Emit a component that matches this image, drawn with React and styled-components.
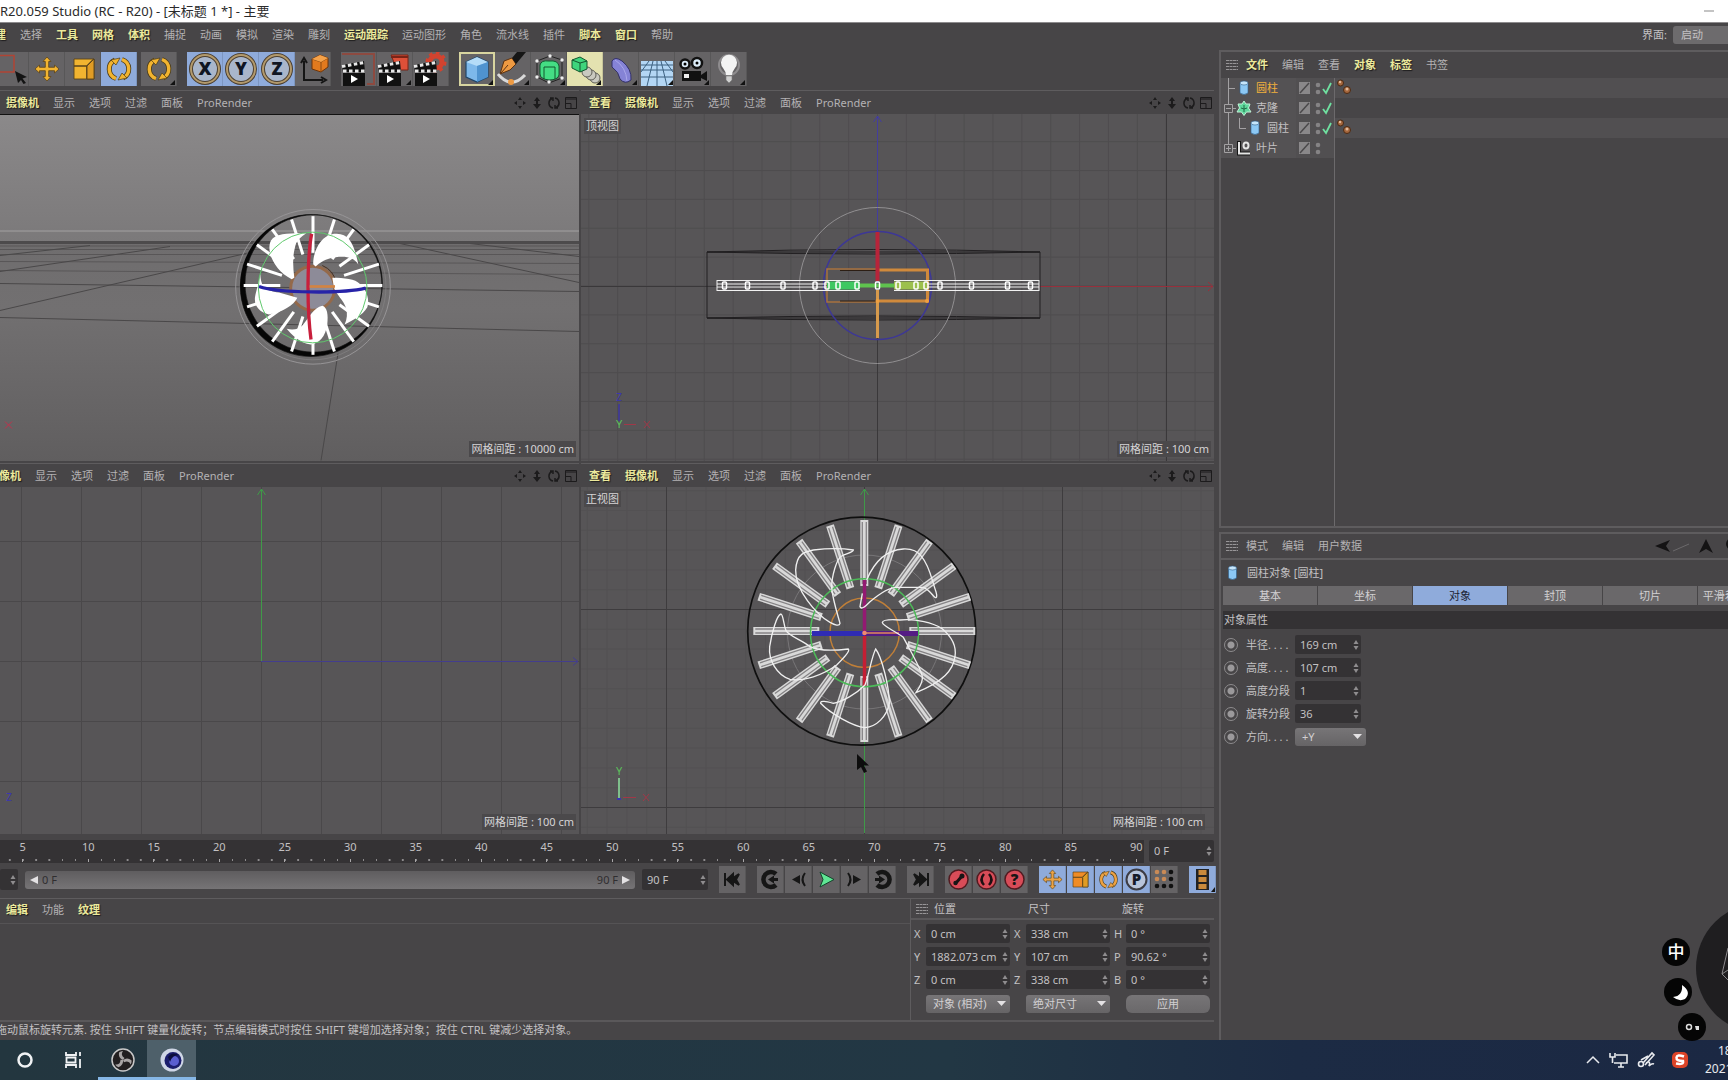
import React, { useState } from 'react';
import styled, { createGlobalStyle, css } from 'styled-components';

const GlobalStyle = createGlobalStyle`
  :root {
    --base: #474547;
    --dark: #343234;
    --edge: #5e5c5e;
    --button: #656365;
    --blue: #8fabdb;
    --text: #c3c1c3;
    --yellow: #ecea9c;
  }
  * { box-sizing: border-box; }
  body {
    margin: 0;
    background: var(--base);
    color: var(--text);
    font-family: 'Noto Sans', 'Noto Sans CJK SC', sans-serif;
    font-size: 11px;
    line-height: 16px;
  }
  button, input, select { font: inherit; color: inherit; margin: 0; padding: 0; border: 0; background: none; border-radius: 0; }
  svg { display: block; }
`;

const Shell = styled.div`
  position: relative;
  display: flex;
  flex-direction: column;
  min-height: 100vh;
  overflow: hidden;
`;

const TitleBar = styled.header`
  display: flex;
  justify-content: space-between;
  align-items: center;
  height: 23px;
  padding-right: 14px;
  background: #fff;
  border-bottom: 1px solid #8d8b8d;
  color: #2b2b2b;
  font-size: 13px;
  white-space: nowrap;
`;
const Minimize = styled.button`
  width: 10px;
  height: 2px;
  background: #c4c4c4;
`;

const MenuBar = styled.nav`
  display: flex;
  align-items: center;
  justify-content: space-between;
  height: 27px;
  padding-bottom: 4px;
`;
const Menu = styled.div`
  display: flex;
  flex: 1;
  align-items: center;
  gap: 14px;
  margin-left: ${p => p.$start || 0}px;
  white-space: nowrap;
`;
const MenuItem = styled.button`
  flex: none;
  color: ${p => (p.$hot ? 'var(--yellow)' : '#b4b2b4')};
  font-weight: ${p => (p.$hot ? 600 : 400)};
  text-shadow: ${p => (p.$hot ? '1px 1px 1px #1d1c1d' : 'none')};
`;
const Layout = styled.div`
  display: flex;
  align-items: center;
  gap: 6px;
  select { appearance: none; width: 55px; height: 18px; padding-left: 8px; background: #6d6b6d; border-radius: 3px 0 0 3px; }
`;

const Workspace = styled.main`
  display: grid;
  grid-template-columns: minmax(0, 1fr) 511px;
  flex: 1;
`;
const LeftSide = styled.div`
  display: flex;
  flex-direction: column;
  min-width: 0;
  padding-right: 3px;
`;

const Toolbar = styled.div`
  display: flex;
  align-items: flex-start;
  gap: 10px;
  height: 40px;
  padding-top: 2px;
  margin-left: -7px;
`;
const ToolGroup = styled.div`
  display: flex;
  gap: ${p => p.$gap || 0}px;
`;
const Tool = styled.button`
  width: ${p => (p.$small ? 27 : 36)}px;
  height: ${p => (p.$small ? 27 : 34)}px;
  background: ${p => (p.$on ? 'var(--blue)' : p.$warm ? '#e4e2b0' : 'var(--button)')};
  box-shadow: ${p => (p.$framed ? 'inset 0 0 0 2px #d8d5a0' : 'inset -1px 0 0 #0000001f')};
`;

const Views = styled.section`
  display: grid;
  grid-template-columns: 579fr 633fr;
  grid-template-rows: 1fr 1fr;
  gap: 2px;
  flex: 1;
  padding-bottom: 6px;
`;
const Pane = styled.article`
  display: flex;
  flex-direction: column;
  min-width: 0;
  overflow: hidden;
`;
const PaneHeader = styled.div`
  display: flex;
  align-items: center;
  justify-content: space-between;
  height: 24px;
  padding-right: 2px;
  border-top: 1px solid var(--edge);
`;
const PaneTools = styled.div`
  display: flex;
  gap: 5px;
  button { width: 12px; height: 12px; }
`;
const Canvas = styled.div`
  position: relative;
  flex: 1;
  background: #575557;
  > svg { position: absolute; inset: 0; width: 100%; height: 100%; }
  ${p => p.$active && css`
    border-top: 1px solid #111;
    outline: 1px solid #cfcdcf;
    outline-offset: -2px;
  `}
`;
const Caption = styled.span`
  position: absolute;
  padding: 0 2px;
  background: #4b494b;
  color: #d6d4d6;
  ${p => (p.$bottom ? css`right: ${p.$right || 3}px; bottom: 4px;` : 'left: 3px; top: 4px;')}
`;

const RulerRow = styled.div`
  display: flex;
  height: 23px;
  gap: 5px;
`;
const Ruler = styled.div`
  flex: 1;
  overflow: hidden;
  background: var(--dark);
`;
const RulerMarks = styled.ol`
  display: flex;
  margin: 0 -25px 0 -10px;
  padding: 0;
  list-style: none;
  line-height: 14px;
  li {
    flex: 1;
    height: 23px;
    text-align: center;
    background: linear-gradient(#a9a7a9, #a9a7a9) center 19px / 1px 3px no-repeat,
      radial-gradient(circle at 50% 20px, #8d8b8d 1px, transparent 1px) 0 0 / 20% 100%;
  }
`;

const Transport = styled.div`
  display: flex;
  align-items: center;
  gap: 11px;
  height: 35px;
  margin-right: -2px;
  padding-bottom: 2px;
`;
const RangeGroup = styled.div`
  display: flex;
  flex: 1;
  align-items: center;
  gap: 7px;
`;
const Range = styled.div`
  display: flex;
  flex: 1;
  align-items: center;
  gap: 4px;
  height: 18px;
  padding: 0 5px;
  border-radius: 3px;
  background: linear-gradient(#5f5d5f, #767476);
  color: #302e30;
  span { flex: 1; }
  span:nth-of-type(2) { text-align: right; }
`;

const FieldBox = styled.div`
  display: flex;
  align-items: center;
  width: ${p => (p.$width ? p.$width + 'px' : 'auto')};
  flex: ${p => (p.$width ? 'none' : 1)};
  min-width: 0;
  height: ${p => p.$height || 19}px;
  padding: 0 2px 0 5px;
  background: var(--dark);
  border-radius: 2px;
  input { flex: 1; width: 0; min-width: 0; outline: none; }
`;
const DropBox = styled.div`
  display: flex;
  align-items: center;
  position: relative;
  width: ${p => (p.$width ? p.$width + 'px' : 'auto')};
  flex: ${p => (p.$width ? 'none' : 1)};
  height: 18px;
  border-radius: 3px;
  background: linear-gradient(#777577, #666466);
  color: #d2d0d2;
  select { appearance: none; width: 100%; height: 18px; padding-left: 7px; }
  svg { position: absolute; right: 4px; pointer-events: none; }
`;

const BottomPanels = styled.section`
  display: flex;
  height: 122px;
  border-top: 1px solid var(--edge);
`;
const Materials = styled.div`
  flex: 1;
`;
const MaterialsHead = styled.div`
  display: flex;
  height: 25px;
  padding: 0 0 2px 6px;
  border-bottom: 1px solid #555355;
`;
const Coordinates = styled.form`
  width: 304px;
  border-left: 1px solid var(--edge);
`;
const CoordHead = styled.div`
  display: flex;
  align-items: center;
  gap: 6px;
  height: 21px;
  padding-left: 5px;
  border-bottom: 2px solid #5a585a;
  b { width: 88px; font-weight: 400; }
`;
const CoordGrid = styled.div`
  display: grid;
  grid-template-columns: repeat(3, 1fr);
  gap: 4px;
  padding: 4px 4px 0 3px;
`;
const CoordCell = styled.div`
  display: flex;
  align-items: center;
  height: ${p => (p.$last ? 22 : 19)}px;
  label { width: 12px; }
`;
const Blank = styled.span`
  width: 12px;
`;
const ApplyButton = styled.button`
  flex: 1;
  height: 18px;
  border-radius: 6px;
  background: linear-gradient(#777577, #6a686a);
  color: #d2d0d2;
`;
const StatusBar = styled.footer`
  height: 20px;
  margin-left: -4px;
  border-top: 2px solid #5a585a;
  white-space: nowrap;
  overflow: hidden;
`;

const RightSide = styled.aside`
  display: grid;
  grid-template-rows: 478fr 508fr;
  gap: 4px;
  margin-left: 2px;
  min-width: 0;
`;
const Manager = styled.section`
  display: flex;
  flex-direction: column;
  min-width: 0;
  overflow: hidden;
  border-left: 2px solid var(--edge);
  border-top: 2px solid var(--edge);
`;
const ManagerHead = styled.div`
  display: flex;
  align-items: center;
  gap: 8px;
  height: 26px;
  padding: 0 0 1px 5px;
`;
const treeColumns = css`
  display: grid;
  grid-template-columns: 75px 39px 1fr;
`;
const Tree = styled.ul`
  margin: 0;
  padding: 0;
  list-style: none;
`;
const TreeRow = styled.li`
  ${treeColumns}
  height: 20px;
`;
const TreeName = styled.div`
  display: flex;
  align-items: center;
  gap: 4px;
  background: #545254;
  color: ${p => (p.$selected ? '#f0b03c' : 'var(--text)')};
`;
const TreeFlags = styled.div`
  background: #514f51;
  border-right: 1px solid #6c6a6c;
`;
const TreeTags = styled.div`
  background: ${p => (p.$alt ? '#514f51' : 'transparent')};
`;
const TreeRest = styled.div`
  ${treeColumns}
  flex: 1;
  i { grid-column: 2; border-right: 1px solid #6c6a6c; }
`;
const TreeEnd = styled.div`
  border-top: 2px solid var(--edge);
`;

const AttrHead = styled(ManagerHead)`
  border-bottom: 2px solid var(--edge);
`;
const AttrNav = styled.div`
  display: flex;
  gap: 4px;
`;
const AttrTitle = styled.div`
  display: flex;
  align-items: center;
  gap: 8px;
  height: 26px;
  padding-left: 5px;
`;
const Tabs = styled.div`
  display: flex;
  gap: 1px;
  margin-left: 2px;
`;
const Tab = styled.button`
  flex: none;
  width: 94px;
  height: 19px;
  white-space: nowrap;
  background: ${p => (p.$on ? 'var(--blue)' : '#6a686a')};
  color: ${p => (p.$on ? '#1c2333' : '#d2d0d2')};
`;
const SectionTitle = styled.h2`
  margin: 6px 0 4px 2px;
  padding-left: 1px;
  height: 18px;
  background: var(--dark);
  font-size: 11px;
  font-weight: 400;
  line-height: 18px;
`;
const AttrRow = styled.div`
  display: flex;
  align-items: center;
  height: 23px;
  padding-left: 3px;
  label { width: 49px; margin-left: 8px; white-space: nowrap; overflow: hidden; }
`;
const KeyDot = styled.input`
  appearance: none;
  width: 14px;
  height: 14px;
  border: 1px solid #8d8b8d !important;
  border-radius: 50% !important;
  background: radial-gradient(circle, #9b999b 3px, transparent 4px) !important;
`;

const Taskbar = styled.div`
  display: flex;
  justify-content: space-between;
  height: 40px;
  overflow: hidden;
  background: linear-gradient(90deg, #23363f, #223744 55%, #1c2b44 75%, #1b2843);
`;
const TaskApps = styled.div`
  display: flex;
`;
const TaskApp = styled.button`
  display: grid;
  place-items: center;
  width: 49px;
  height: 40px;
  background: ${p => (p.$active ? '#4e606a' : 'none')};
  border-bottom: 3px solid ${p => (p.$running ? '#86b7e6' : 'transparent')};
  padding-top: 3px;
`;
const Tray = styled.div`
  display: flex;
  align-items: center;
  gap: 9px;
  color: #e8eaee;
`;
const TrayIcon = styled.button`
  padding: 0 ${p => (p.$wide ? 7 : 0)}px;
`;
const Clock = styled.time`
  width: 23px;
  overflow: hidden;
  font-size: 12px;
  line-height: 18px;
  span { display: block; margin-left: 13px; }
`;
const ImeWidget = styled.div`
  position: absolute;
  right: 0;
  bottom: 38px;
`;

/* ---------- small drawings ---------- */

const Grip = () => (
  <svg width="12" height="12" stroke="#979597" aria-hidden="true">
    <path d="M0 1.5H12M0 4.5H12M0 7.5H12M0 10.5H12" strokeDasharray="3 .5" />
  </svg>
);

const Spin = () => (
  <svg width="6" height="10" fill="#8f8d8f" aria-hidden="true">
    <path d="M3 0L5.5 4H.5ZM3 10L.5 6H5.5Z" />
  </svg>
);

const CylinderIcon = ({ size = 16 }) => (
  <svg width={size} height="16" viewBox={`0 0 ${size} 16`} aria-hidden="true">
    <g transform={`translate(${size / 2 - 5} 0)`}>
      <path d="M1 3V13Q5 16 9 13V3" fill="#8cc8f4" stroke="#2d5c88" strokeWidth=".6" />
      <ellipse cx="5" cy="3" rx="4" ry="2" fill="#c6e6fb" stroke="#2d5c88" strokeWidth=".6" />
    </g>
  </svg>
);

const ClonerIcon = () => (
  <svg width="16" height="16" viewBox="0 0 16 16" aria-hidden="true">
    <path d="M8 1L10 4 14 4 12.500 8 15 12 10.500 12 8 15.500 5.500 12 1 12 3.500 8 2 4 6 4Z" fill="#5fd79c" stroke="#c2f2d8" />
    <path d="M8 5V12M5 8L8 9 11 8" stroke="#1f6b45" fill="none" />
  </svg>
);

const NullIcon = () => (
  <svg width="16" height="16" viewBox="0 0 16 16" fill="none" stroke="#e6e6e6" strokeWidth="2" aria-hidden="true">
    <path d="M3 1V13.500H14" stroke="#151515" strokeWidth="4" />
    <path d="M3 2V13.500H14" />
    <ellipse cx="10" cy="5.500" rx="2.500" ry="3" />
  </svg>
);

const Ring = ({ cx = 18, cy = 17, r = 10, color = '#f2b430' }) => (
  <g fill="none" transform={`translate(${cx} ${cy}) scale(${r / 10})`}>
    <g stroke="#4c3c18" strokeWidth="5">
      <path d="M-3 9.500A10 10 0 0 1 -4 -9M3 -9.500A10 10 0 0 1 4 9" />
    </g>
    <g stroke={color} strokeWidth="3.400">
      <path d="M-3 9.500A10 10 0 0 1 -4 -9M3 -9.500A10 10 0 0 1 4 9" />
    </g>
    <path d="M-8 -9L1 -11 -3 -4ZM8 9L-1 11 3 4Z" fill={color} stroke="#4c3c18" strokeWidth=".7" />
  </g>
);

const MoveCross = ({ cx = 18, cy = 17, s = 1, color = '#f2b430' }) => (
  <path
    transform={`translate(${cx} ${cy}) scale(${s})`}
    d="M0 -12L4 -7.500H1.700V-1.700H7.500V-4L12 0 7.500 4V1.700H1.700V7.500H4L0 12-4 7.500H-1.700V1.700H-7.500V4L-12 0-7.500-4V-1.700H-1.700V-7.500H-4Z"
    fill={color} stroke="#5a431a" strokeWidth=".8"
  />
);

const ScaleBox = ({ x = 9, y = 7, s = 1, color = '#f2b430' }) => (
  <g transform={`translate(${x} ${y}) scale(${s})`} stroke="#5a431a" strokeWidth=".9" fill={color}>
    <path d="M0 0H20V20H0Z" />
    <path d="M0 7H13V20M13 7L20 0" fill="none" strokeWidth="1.600" />
    <path d="M13 7L20 0V20H13Z" fill="#e09c24" />
  </g>
);

const AxisLetter = ({ letter }) => (
  <g>
    <circle cx="18" cy="17" r="14" fill="#a9b6cb" stroke="#4b3f31" strokeWidth="4" />
    <circle cx="18" cy="17" r="14" fill="none" stroke="#b39a6c" strokeWidth="2" />
    <text x="18" y="23" textAnchor="middle" fontFamily="Open Sans, sans-serif" fontSize="18" fontWeight="800" fill="#101522">{letter}</text>
  </g>
);

const Clapper = () => (
  <g>
    <path d="M2 21H24V34H2Z" fill="#111" />
    <path d="M1 13L23 9 24 20H2Z" fill="#111" />
    <path d="M1 14.500L23 10.500M2 19H24" stroke="#e9e9e9" strokeWidth="3" strokeDasharray="3.500 2.500" />
    <path d="M10 23L17 27 10 31Z" fill="#fff" />
  </g>
);

const Corner = () => <path d="M34 28V33H29Z" fill="#111" />;

const art = {
  select: <g><path d="M0 3.500H21V20H0" fill="none" stroke="#b04434" strokeWidth="1.500" /><path d="M22 19L34 25 29.500 26.500 33 31 30.500 32 28 28 25 31Z" fill="#131313" /></g>,
  move: <MoveCross />,
  scale: <ScaleBox />,
  rotate: <Ring />,
  last: <g><Ring /><Corner /></g>,
  x: <AxisLetter letter="X" />,
  y: <AxisLetter letter="Y" />,
  z: <AxisLetter letter="Z" />,
  world: <g>
    <path d="M9 29V9M8 28H28M6 11L9 6 12 11M26 25L31 28 26 31" fill="none" stroke="#151515" strokeWidth="2" />
    <path d="M17 7L25 3 33 6V15L26 20 17 17Z" fill="#e27a1e" stroke="#6f3509" /><path d="M17 7L26 10 33 6M26 10V20" fill="none" stroke="#8a4a12" />
    <path d="M17 7L25 3 33 6 26 10Z" fill="#f5a24a" />
  </g>,
  render: <g><path d="M1 2H33V32H26" fill="none" stroke="#8d4a40" strokeWidth="2" /><Clapper /></g>,
  renderPv: <g><path d="M14 3H31V18H20Z" fill="#dd5038" stroke="#7b2417" /><path d="M14 5H31" stroke="#7b2417" strokeWidth="2" /><Clapper /><Corner /></g>,
  renderSet: <g><circle cx="23" cy="10" r="6" fill="none" stroke="#d3432f" strokeWidth="5" /><circle cx="23" cy="10" r="9" fill="none" stroke="#d3432f" strokeWidth="3" strokeDasharray="3.500 3.500" /><Clapper /></g>,
  cube: <g><path d="M7 10L18 5 29 10V25L18 30 7 25Z" fill="#7db8ea" stroke="#21476a" strokeWidth="1.200" /><path d="M7 10L18 5 29 10 18 14Z" fill="#b4dcf8" /><path d="M18 14L29 10V25L18 30Z" fill="#4f93cf" /><Corner /></g>,
  pen: <g><path d="M3 22Q16 38 30 23" fill="none" stroke="#d9d9d9" strokeWidth="3" /><path d="M5 22L9 9 17 6 21 12 15 18Z" fill="#ee9a42" stroke="#5b3212" /><path d="M6 21L13 13" stroke="#5b3212" /><path d="M17 6L22 0H31L21 12Z" fill="#161616" /><circle cx="16" cy="30" r="3" fill="#ee9a42" /><Corner /></g>,
  subdiv: <g><path d="M6 9L19 4 31 8V26L18 31 6 25Z" fill="none" stroke="#222" /><path d="M9 13Q10 8 18 9 27 8 28 14V23Q27 28 18 28 9 27 9 22Z" fill="#44dd84" stroke="#12562f" /><path d="M13 15H24V27M13 15V27" fill="none" stroke="#12562f" /><g fill="#eee"><circle cx="6" cy="9" r="1.700" /><circle cx="19" cy="4" r="1.700" /><circle cx="31" cy="8" r="1.700" /><circle cx="31" cy="26" r="1.700" /><circle cx="6" cy="25" r="1.700" /><circle cx="18" cy="30" r="1.700" /></g><Corner /></g>,
  array: <g><g fill="#c9c9c0" stroke="#5d5d55"><circle cx="28" cy="26" r="5" /><circle cx="24" cy="23" r="5" /><circle cx="20" cy="20" r="5" /></g><path d="M5 8L13 5 20 9V17L13 20 5 16Z" fill="#3ed47c" stroke="#12562f" /><path d="M5 8L13 11 20 9M13 11V20" fill="none" stroke="#12562f" /><Corner /></g>,
  bend: <g><path d="M9 9Q12 4 19 9 29 17 28 28 22 33 17 27 16 20 9 15Z" fill="#8583d6" stroke="#33316b" /><path d="M12 8Q23 15 24 29" fill="none" stroke="#a9a7ea" /><Corner /></g>,
  floor: <g><path d="M2 9H34V34H2Z" fill="#b3d6f4" /><path d="M2 13H34M2 18H34M2 25H34M10 9L2 20M14 9L8 34M22 9L28 34M26 9L34 20M18 9V34" stroke="#3d6180" fill="none" /><Corner /></g>,
  camera: <g><circle cx="10" cy="12" r="4.500" fill="#dcecf8" stroke="#111" strokeWidth="2.500" /><circle cx="22" cy="11" r="5" fill="#dcecf8" stroke="#111" strokeWidth="2.500" /><circle cx="10" cy="12" r="1.500" /><circle cx="22" cy="11" r="1.500" /><path d="M7 19H26V23L32 19V29L26 26V29H7Z" fill="#111" /><path d="M9 22H14V26H9Z" fill="#eee" /><Corner /></g>,
  light: <g><circle cx="18" cy="13" r="10" fill="none" stroke="#8e8c8e" strokeWidth="2" /><path d="M15 23Q15 20 12 16A8 8 0 1 1 24 16Q21 20 21 23Z" fill="#f3f3f3" /><path d="M15 24H21V28L18 31 15 28Z" fill="#cfcfcf" stroke="#777" strokeWidth=".6" /><Corner /></g>,
};

const mini = {
  first: <path d="M6 7V20M14 8L8 13.500 14 19V15L20 19 17 13.500 20 8 14 12Z" stroke="#161616" strokeWidth="2" />,
  prevKey: <g><path d="M19 8A7.500 7.500 0 1 0 19 19" fill="none" stroke="#161616" strokeWidth="4.500" /><path d="M11 13.500L17 9.500V12H21V15H17V17.500Z" /></g>,
  prev: <g><path d="M7 13.500L15 9V18Z" /><path d="M20 7Q15 13.500 20 20" fill="none" stroke="#161616" strokeWidth="2" /></g>,
  play: <path d="M7 6L21 13.500 7 21 10 13.500Z" fill="#5fe694" stroke="#12442a" />,
  next: <g><path d="M20 13.500L12 9V18Z" /><path d="M7 7Q12 13.500 7 20" fill="none" stroke="#161616" strokeWidth="2" /></g>,
  nextKey: <g><path d="M8 8A7.500 7.500 0 1 1 8 19" fill="none" stroke="#161616" strokeWidth="4.500" /><path d="M16 13.500L10 9.500V12H6V15H10V17.500Z" /></g>,
  last: <path d="M21 7V20M13 8L19 13.500 13 19V15L7 19 10 13.500 7 8 13 12Z" stroke="#161616" strokeWidth="2" />,
  record: <g><circle cx="13.500" cy="13.500" r="9.500" fill="#d84c58" stroke="#521a20" strokeWidth="1.500" /><path d="M10 18L18 9" stroke="#1d1012" strokeWidth="3" /><circle cx="17" cy="10" r="2.500" /><circle cx="10.500" cy="17" r="2.200" /></g>,
  auto: <g><circle cx="13.500" cy="13.500" r="9.500" fill="#d84c58" stroke="#521a20" strokeWidth="1.500" /><path d="M11 8Q6 13.500 11 19M16 8Q21 13.500 16 19" fill="none" stroke="#1d1012" strokeWidth="2.500" /></g>,
  help: <g><circle cx="13.500" cy="13.500" r="9.500" fill="#d84c58" stroke="#521a20" strokeWidth="1.500" /><text x="13.500" y="19" textAnchor="middle" fontSize="15" fontWeight="800" fontFamily="Open Sans, sans-serif">?</text></g>,
  keyMove: <MoveCross cx={13.5} cy={13.5} s={0.8} color="#eda243" />,
  keyScale: <ScaleBox x={6} y={6} s={0.75} color="#f08c26" />,
  keyRotate: <Ring cx={13.5} cy={13.5} r={7.5} color="#eda243" />,
  keyParam: <g><circle cx="13.500" cy="13.500" r="10" fill="#b8c4da" stroke="#3c3c44" strokeWidth="2" /><text x="13.500" y="19" textAnchor="middle" fontSize="15" fontWeight="800" fontFamily="Open Sans, sans-serif" fill="#161a28">P</text></g>,
  keyPla: <g>{[6, 13, 20].map(y => [6, 13, 20].map(x => <circle key={x + '-' + y} cx={x} cy={y} r="2.300" fill={x < 20 && y < 20 ? '#c98a56' : '#111'} />))}</g>,
  film: <g><path d="M7 3H20V24H7Z" fill="#222" /><path d="M9.500 4H17.500V9H9.500ZM9.500 11H17.500V16H9.500ZM9.500 18H17.500V23H9.500Z" fill="#c98a3c" /><path d="M26 21V26H22Z" /></g>,
};

const Icon = ({ name }) => <svg width="36" height="34" viewBox="0 0 36 34" aria-hidden="true">{art[name]}</svg>;
const MiniIcon = ({ name }) => <svg width="27" height="27" viewBox="0 0 27 27" fill="#161616" aria-hidden="true">{mini[name]}</svg>;

/* ---------- viewport drawings ---------- */

const range = n => Array.from({ length: n }, (_, i) => i);

const Grid = ({ x, y, step, w, h, ox, oy, color = '#4d4b4d' }) => {
  const lines = [];
  for (let gx = x - Math.floor((x - ox) / step) * step; gx < ox + w; gx += step) lines.push(`M${gx} ${oy}V${oy + h}`);
  for (let gy = y - Math.floor((y - oy) / step) * step; gy < oy + h; gy += step) lines.push(`M${ox} ${gy}H${ox + w}`);
  return <path d={lines.join('')} stroke={color} />;
};

const Perspective = () => (
  <svg viewBox="0 114 579 347" preserveAspectRatio="xMidYMid slice" fill="none" aria-hidden="true">
    <defs>
      <linearGradient id="sky" x1="0" y1="0" x2="0" y2="1"><stop stopColor="#8b898a" /><stop offset="1" stopColor="#7b797a" /></linearGradient>
      <linearGradient id="ground" x1="0" y1="0" x2="0" y2="1"><stop stopColor="#6f6d6e" /><stop offset=".3" stopColor="#727071" /><stop offset="1" stopColor="#605e5f" /></linearGradient>
    </defs>
    <path d="M0 114H579V242H0Z" fill="url(#sky)" />
    <path d="M0 241H579V461H0Z" fill="url(#ground)" />
    <path d="M0 230.500H579" stroke="#a3a1a2" />
    <path d="M0 242H579" stroke="#4d4b4c" strokeWidth="3" />
    <path d="M0 245.500H579M0 249H579M0 254H579M0 261L579 263M0 270L579 274" stroke="#535152" strokeWidth=".8" />
    <path d="M0 283L579 291M0 317L579 331M0 310L250 252M0 271L170 246M0 255L90 245M400 243L579 282M470 243L579 256M338 353L321 460" stroke="#4a4849" />
    <g transform="translate(219 190) scale(.3333)">
      <path
        d="M63 285A213 213 0 1 0 489 285A213 213 0 1 0 63 285ZM78 279A206 206 0 1 0 490 279A206 206 0 1 0 78 279Z"
        fill="#060606" fillRule="evenodd" stroke="#121212" strokeWidth="2"
      />
      <circle cx="282" cy="289" r="232" stroke="#979597" strokeWidth="3" />
      <circle cx="281" cy="288" r="220" stroke="#858385" strokeWidth="2" />
      <g stroke="#fff" strokeWidth="9">
        {range(20).map(i => <path key={i} transform={`rotate(${i * 18} 282 285)`} d="M282 77V187" />)}
      </g>
      <circle cx="281" cy="293" r="66" fill="#8d8b98" stroke="#94694a" strokeWidth="9" />
      <path d="M310 225Q345 240 350 275" stroke="#4a2f1c" strokeWidth="3" />
      <g fill="#fff">
        <path d="M262 128C220 128 170 126 156 150C140 180 165 240 218 266L226 262C222 230 220 200 228 170C232 148 248 138 262 128Z" />
        <path d="M283 222C280 195 300 135 345 130C390 125 405 160 418 222C405 200 380 196 350 200C320 203 300 218 290 228Z" />
        <path d="M340 262C375 262 410 266 422 280C445 300 452 330 445 350C430 375 400 390 377 402C385 385 385 370 382 355C375 330 350 310 345 292Z" />
        <path d="M310 346C325 350 328 375 325 400C320 440 300 460 275 462C245 460 215 430 203 415C225 420 240 415 250 405C268 385 285 350 310 346Z" />
        <path d="M124 250C125 290 140 302 180 306L235 322C225 345 190 365 150 372C120 365 105 345 108 320C112 300 118 280 124 250Z" />
      </g>
      <ellipse cx="281" cy="291" rx="163" ry="166" stroke="#5fc96c" strokeWidth="3" />
      <path d="M278 130C266 190 262 340 276 447" stroke="#c81f3c" strokeWidth="10" />
      <path d="M120 288C180 308 370 310 440 293" stroke="#2723a8" strokeWidth="10" />
      <path d="M272 288H348" stroke="#d28442" strokeWidth="8" />
    </g>
    <path d="M5 421L12 428M12 421L5 428" stroke="#c2304c" />
  </svg>
);

const TopView = () => (
  <svg viewBox="581 114 633 347" preserveAspectRatio="xMidYMid slice" fill="none" aria-hidden="true">
    <Grid x={877.5} y={286} step={28.87} ox={581} oy={114} w={633} h={347} color="#4f4d4f" />
    <path d="M1166.500 114V461M877.500 286V461M581 286.500H877" stroke="#3a383a" />
    <path d="M877.500 116V286M873.500 122L877.500 116 881.500 122" stroke="#433d9e" />
    <path d="M1039 286.500H1213M1208 282L1213 286.500 1208 291" stroke="#98303c" />
    <path d="M707 252H1040V318H707ZM707 252Q873 247 1040 252M707 252Q873 256 1040 252M707 318Q873 322 1040 318M707 318Q873 314 1040 318" stroke="#222022" />
    <circle cx="877.500" cy="285.500" r="78" stroke="#918f91" />
    <circle cx="877.500" cy="285.500" r="54" stroke="#3d3796" strokeWidth="1.500" />
    <path d="M877 269H827V302H877" stroke="#a8713f" strokeWidth="1.500" />
    <path d="M840 270.500H877M840 301H877" stroke="#2c1e14" />
    <path d="M877 270H927.500V301H877" stroke="#d08a3c" strokeWidth="3" />
    <path d="M877.500 232V281" stroke="#b8243a" strokeWidth="4" />
    <path d="M877.500 290V338" stroke="#d79a4c" strokeWidth="3" />
    <path d="M827 285.500H860" stroke="#3fc862" strokeWidth="8" />
    <path d="M894 285.500H927" stroke="#9cc04c" strokeWidth="8" />
    <path d="M860 285.500H894" stroke="#5fc24e" strokeWidth="4" />
    <path d="M717 280.500H860M894 280.500H1039M717 290.500H860M894 290.500H1039M717 284H827M717 287H827M927 284H1039M927 287H1039M717 280V291M1039 280V291" stroke="#f2f2f2" />
    <g stroke="#fff" strokeWidth="1.500">
      {[724.5, 747.5, 783, 815, 827, 838, 857, 877.5, 898, 916, 926, 940, 971.5, 1007.5, 1030.5].map(x => (
        <rect key={x} x={x - 2} y="282" width="4" height="7" rx="1" />
      ))}
    </g>
    <circle cx="877.500" cy="301" r="2" fill="#f0a040" /><circle cx="927" cy="301" r="2" fill="#f0a040" />
    <path d="M619 404V421" stroke="#3b35a0" strokeWidth="1.500" />
    <path d="M624 424.500H636M644 421L650 428M650 421L644 428" stroke="#a03848" />
    <text x="619" y="401" textAnchor="middle" fontSize="10" fill="#3b35b0">Z</text>
    <text x="619" y="428" textAnchor="middle" fontSize="11" fill="#5cc05c">Y</text>
  </svg>
);

const SideView = () => (
  <svg viewBox="0 487 579 347" preserveAspectRatio="xMidYMid slice" fill="none" aria-hidden="true">
    <Grid x={261.5} y={661.5} step={60} ox={0} oy={487} w={579} h={347} color="#4a484a" />
    <path d="M261.500 489V661M257.500 495L261.500 489 265.500 495" stroke="#3f9a48" />
    <path d="M261 661.500H578M573 657.500L578 661.500 573 665.500" stroke="#433d8e" />
    <text x="9" y="801" textAnchor="middle" fontSize="10" fill="#3b35b0">Z</text>
  </svg>
);

const FrontView = () => (
  <svg viewBox="581 487 633 347" preserveAspectRatio="xMidYMid slice" fill="none" aria-hidden="true">
    <Grid x={864.5} y={609.5} step={19.8} ox={581} oy={487} w={633} h={347} color="#535153" />
    <Grid x={864.5} y={609.5} step={198} ox={581} oy={487} w={633} h={347} color="#3e3c3e" />
    <path d="M864.500 489V833M860.500 495L864.500 489 868.500 495" stroke="#3f9a48" />
    <circle cx="864.500" cy="632" r="77" stroke="#787678" />
    <circle cx="861.700" cy="631.200" r="114" stroke="#0f0f0f" strokeWidth="1.700" />
    {range(20).map(i => (
      <g key={i} transform={`rotate(${i * 18} 864.300 631)`}>
        <path d="M864.300 520V586" stroke="#d9d9d9" strokeWidth="8" />
        <path d="M862.300 522V584M866.300 522V584" stroke="#858385" strokeWidth="1.300" />
      </g>
    ))}
    <circle cx="864.500" cy="632.700" r="54" stroke="#4cbb58" strokeWidth="1.500" />
    <circle cx="864.600" cy="632.700" r="34.700" stroke="#c07f38" strokeWidth="1.500" />
    <path d="M864.500 580V633" stroke="#931a72" strokeWidth="3.500" />
    <path d="M864.500 633V686" stroke="#c41f34" strokeWidth="3.500" />
    <path d="M812 633.500H864" stroke="#2f2bb4" strokeWidth="5" />
    <path d="M864 633.500H918" stroke="#541c84" strokeWidth="5" />
    <path d="M864 633H899" stroke="#e08a5c" strokeWidth="1.500" />
    <circle cx="864.500" cy="633" r="2.300" fill="#f08a70" />
    <g transform="translate(730 500) scale(.3333)" stroke="#efefef" strokeWidth="4">
      <path d="M370 150C368 158 350 160 335 168C320 175 305 230 305 262C308 300 325 350 330 370C328 380 315 375 300 367C260 345 195 270 197 210C200 160 225 155 250 150C290 145 340 145 370 150Z" />
      <path d="M397 280L390 320C395 330 405 320 420 305C450 280 480 262 500 262L580 262C600 270 610 290 615 292C620 295 622 290 618 275C605 240 600 200 575 170C560 150 540 146 520 147C470 150 435 180 410 240" />
      <path d="M457 368C458 360 480 358 510 360C560 355 610 370 635 385C665 410 680 440 675 470C670 510 640 545 558 578C565 565 580 550 577 530C575 510 540 450 520 412C500 395 460 380 457 368Z" />
      <path d="M437 447C425 470 418 520 405 555C380 580 340 605 310 610C290 605 270 600 272 610C300 640 370 680 405 683C440 680 470 650 478 610C478 560 455 470 437 447Z" />
      <path d="M153 342C160 345 160 370 168 392C180 410 215 420 240 440C270 455 330 450 355 447C362 452 340 475 320 495C280 525 220 545 180 538C140 525 115 480 119 440C125 400 140 345 153 342Z" />
    </g>
    <path d="M857 754V770L861 767 864 773 867 771.500 864 765.500H869Z" fill="#0d0d0d" />
    <path d="M619 778V799" stroke="#7fbf8c" strokeWidth="2" />
    <path d="M617 799H621" stroke="#3b35b0" strokeWidth="2" />
    <path d="M623 797.500H636M643 794L649 801M649 794L643 801" stroke="#a03848" />
    <text x="619" y="775" textAnchor="middle" fontSize="11" fill="#5cc05c">Y</text>
  </svg>
);

/* ---------- parts ---------- */

const Items = ({ items, start }) => (
  <Menu $start={start}>
    {items.map(item => {
      const hot = item.startsWith('*');
      return <MenuItem key={item} type="button" $hot={hot}>{hot ? item.slice(1) : item}</MenuItem>;
    })}
  </Menu>
);

const Tools = ({ names, on = [], warm, framed }) => (
  <ToolGroup>
    {names.map(n => (
      <Tool key={n} type="button" aria-label={n} $on={on.includes(n)} $warm={warm === n} $framed={framed === n}><Icon name={n} /></Tool>
    ))}
  </ToolGroup>
);

const MiniTools = ({ names, on = [] }) => (
  <ToolGroup $gap={1}>
    {names.map(n => <Tool key={n} type="button" aria-label={n} $small $on={on.includes(n)}><MiniIcon name={n} /></Tool>)}
  </ToolGroup>
);

const Field = ({ id, label, value, width, height }) => {
  const [text, setText] = useState(value);
  return (
    <FieldBox $width={width} $height={height}>
      <input id={id} aria-label={label} value={text} onChange={e => setText(e.target.value)} />
      <Spin />
    </FieldBox>
  );
};

const Drop = ({ id, label, value, width }) => (
  <DropBox $width={width}>
    <select id={id} aria-label={label} defaultValue={value}><option>{value}</option></select>
    <svg width="9" height="6" fill="#e4e2e4" aria-hidden="true"><path d="M0 0H9L4.500 5Z" /></svg>
  </DropBox>
);

const viewMenu = ['*查看', '*摄像机', '显示', '选项', '过滤', '面板', 'ProRender'];

const View = ({ start, items = viewMenu, title, spacing, active, right, children }) => (
  <Pane>
    <PaneHeader>
      <Items items={items} start={start} />
      <PaneTools>
        <button type="button" aria-label="pan"><svg width="12" height="12" fill="#1c1b1c"><path d="M6 0L8 3H4ZM6 12L4 9H8ZM0 6L3 4V8ZM12 6L9 8V4Z" /></svg></button>
        <button type="button" aria-label="dolly"><svg width="12" height="12" fill="#1c1b1c"><path d="M6 0L9 4H7V7H10L6 12 2 7H5V4H3Z" /></svg></button>
        <button type="button" aria-label="orbit"><svg width="12" height="12" fill="none" stroke="#1c1b1c" strokeWidth="1.500"><path d="M5 11A5 5 0 0 1 4 1.500M7 1A5 5 0 0 1 8 10.500M2 1H5V4M10 11H7V8" /></svg></button>
        <button type="button" aria-label="maximize"><svg width="12" height="12" fill="none" stroke="#1c1b1c"><path d="M.5 .5H11.500V11.500H.5ZM.5 2H11.500M.5 6.500H6V11.500" /></svg></button>
      </PaneTools>
    </PaneHeader>
    <Canvas $active={active}>
      {children}
      {title && <Caption>{title}</Caption>}
      <Caption $bottom $right={right}>网格间距 : {spacing}</Caption>
    </Canvas>
  </Pane>
);

const branches = {
  leaf: 'M7.500 0V20M7.500 10.500H14',
  open: 'M7.500 0V6M7.500 14V20M3.500 6.500H11.500V14.500H3.500ZM5 10.500H10M11 10.500H15',
  child: 'M7.500 0V20M18.500 0V10.500H25',
  closed: 'M7.500 0V6M3.500 6.500H11.500V14.500H3.500ZM5 10.500H10M7.500 8V13M11 10.500H15',
};

const objects = [
  { name: '圆柱', branch: 'leaf', icon: <CylinderIcon />, check: true, tag: true, selected: true },
  { name: '克隆', branch: 'open', icon: <ClonerIcon />, check: true },
  { name: '圆柱', branch: 'child', icon: <CylinderIcon />, check: true, tag: true },
  { name: '叶片', branch: 'closed', icon: <NullIcon /> },
];

const ObjectRow = ({ item, alt }) => (
  <TreeRow>
    <TreeName $selected={item.selected}>
      <svg width={item.branch === 'child' ? 22 : 11} height="20" overflow="visible" fill="none" stroke="#a3a1a3" aria-hidden="true"><path d={branches[item.branch]} /></svg>
      {item.icon}
      <span>{item.name}</span>
    </TreeName>
    <TreeFlags>
      <svg width="38" height="20" aria-hidden="true">
        <path d="M3 4H14V16H3Z" fill="#8a888a" /><path d="M4 15L13 5" stroke="#4b494b" strokeWidth="1.500" />
        <circle cx="22" cy="7" r="2.300" fill="#858385" /><circle cx="22" cy="14" r="2.300" fill="#858385" />
        {item.check && <path d="M27 11L30 15 35 5" fill="none" stroke="#6fe0a0" strokeWidth="1.800" />}
      </svg>
    </TreeFlags>
    <TreeTags $alt={alt}>
      {item.tag && (
        <svg width="20" height="20" aria-hidden="true">
          <circle cx="5.500" cy="5" r="3" fill="#a5673d" stroke="#4a2a14" /><circle cx="12" cy="12" r="3.500" fill="#a5673d" stroke="#4a2a14" />
          <circle cx="5" cy="4" r="1.200" fill="#e0b898" /><circle cx="12" cy="11" r="1.500" fill="#e0b898" />
        </svg>
      )}
    </TreeTags>
  </TreeRow>
);

const attributes = [
  ['半径. . . .', '169 cm'],
  ['高度. . . .', '107 cm'],
  ['高度分段', '1'],
  ['旋转分段', '36'],
];

const coords = [
  ['X', '0 cm'], ['X', '338 cm'], ['H', '0 °'],
  ['Y', '1882.073 cm'], ['Y', '107 cm'], ['P', '90.62 °'],
  ['Z', '0 cm'], ['Z', '338 cm'], ['B', '0 °'],
];

const App = () => {
  const [tab, setTab] = useState('对象');

  return (
    <Shell>
      <GlobalStyle />
      <TitleBar>
        <span>R20.059 Studio (RC - R20) - [未标题 1 *] - 主要</span>
        <Minimize type="button" aria-label="minimize" />
      </TitleBar>
      <MenuBar>
        <Items
          start={-5}
          items={['*建', '选择', '*工具', '*网格', '*体积', '捕捉', '动画', '模拟', '渲染', '雕刻', '*运动跟踪', '运动图形', '角色', '流水线', '插件', '*脚本', '*窗口', '帮助']}
        />
        <Layout>
          <label htmlFor="layout">界面:</label>
          <select id="layout" defaultValue="启动"><option>启动</option></select>
        </Layout>
      </MenuBar>

      <Workspace>
        <LeftSide>
          <Toolbar>
            <ToolGroup $gap={4}>
              <Tools names={['select', 'move', 'scale', 'rotate']} on={['rotate']} />
              <Tools names={['last']} />
            </ToolGroup>
            <Tools names={['x', 'y', 'z', 'world']} on={['x', 'y', 'z']} />
            <Tools names={['render', 'renderPv', 'renderSet']} />
            <Tools names={['cube', 'pen', 'subdiv', 'array', 'bend', 'floor', 'camera', 'light']} warm="array" framed="cube" />
          </Toolbar>

          <Views>
            <View start={6} items={viewMenu.slice(1)} spacing="10000 cm" active><Perspective /></View>
            <View start={8} title="顶视图" spacing="100 cm"><TopView /></View>
            <View start={-12} items={viewMenu.slice(1)} spacing="100 cm"><SideView /></View>
            <View start={8} title="正视图" spacing="100 cm" right={9}><FrontView /></View>
          </Views>

          <RulerRow>
            <Ruler>
              <RulerMarks>{range(18).map(i => <li key={i}>{(i + 1) * 5}</li>)}</RulerMarks>
            </Ruler>
            <Field label="当前帧" value="0 F" width={65} height={22} />
          </RulerRow>

          <Transport>
            <RangeGroup>
              <Field label="起始帧" value="" width={18} height={21} />
              <Range>
                <svg width="8" height="8" fill="#e4e2e4" aria-hidden="true"><path d="M8 0V8L0 4Z" /></svg>
                <span>0 F</span>
                <span>90 F</span>
                <svg width="8" height="8" fill="#e4e2e4" aria-hidden="true"><path d="M0 0L8 4 0 8Z" /></svg>
              </Range>
              <Field label="结束帧" value="90 F" width={66} height={21} />
            </RangeGroup>
            <MiniTools names={['first']} />
            <MiniTools names={['prevKey', 'prev', 'play', 'next', 'nextKey']} />
            <MiniTools names={['last']} />
            <MiniTools names={['record', 'auto', 'help']} />
            <MiniTools names={['keyMove', 'keyScale', 'keyRotate', 'keyParam', 'keyPla']} on={['keyMove', 'keyScale', 'keyRotate', 'keyParam']} />
            <MiniTools names={['film']} on={['film']} />
          </Transport>

          <BottomPanels>
            <Materials>
              <MaterialsHead><Items items={['*编辑', '功能', '*纹理']} /></MaterialsHead>
            </Materials>
            <Coordinates onSubmit={e => e.preventDefault()}>
              <CoordHead><Grip /><b>位置</b><b>尺寸</b><b>旋转</b></CoordHead>
              <CoordGrid>
                {coords.map(([axis, value], i) => (
                  <CoordCell key={i}>
                    <label htmlFor={`coord-${i}`}>{axis}</label>
                    <Field id={`coord-${i}`} value={value} />
                  </CoordCell>
                ))}
                <CoordCell $last><Blank /><Drop label="坐标模式" value="对象 (相对)" /></CoordCell>
                <CoordCell $last><Blank /><Drop label="尺寸模式" value="绝对尺寸" /></CoordCell>
                <CoordCell $last><Blank /><ApplyButton type="submit">应用</ApplyButton></CoordCell>
              </CoordGrid>
            </Coordinates>
          </BottomPanels>
          <StatusBar>拖动鼠标旋转元素. 按住 SHIFT 键量化旋转；节点编辑模式时按住 SHIFT 键增加选择对象；按住 CTRL 键减少选择对象。</StatusBar>
        </LeftSide>

        <RightSide>
          <Manager>
            <ManagerHead>
              <Grip />
              <Items items={['*文件', '编辑', '查看', '*对象', '*标签', '书签']} />
            </ManagerHead>
            <Tree>
              {objects.map((item, i) => <ObjectRow key={i} item={item} alt={i % 2 === 0} />)}
            </Tree>
            <TreeRest><i /></TreeRest>
            <TreeEnd />
          </Manager>
          <Manager>
            <AttrHead>
              <Grip />
              <Items items={['模式', '编辑', '用户数据']} />
              <AttrNav>
                <svg width="75" height="18" fill="#141314" aria-hidden="true">
                  <path d="M2 9L17 3 13 9 17 15ZM53 2L60 16 53 12 46 16Z" />
                  <path d="M20 14L36 7" stroke="#6b696b" /><circle cx="79" cy="7" r="5" fill="none" stroke="#141314" strokeWidth="2" />
                </svg>
              </AttrNav>
            </AttrHead>
            <AttrTitle><CylinderIcon size={13} /><span>圆柱对象 [圆柱]</span></AttrTitle>
            <Tabs>
              {['基本', '坐标', '对象', '封顶', '切片', '平滑着色(Phong)'].map(t => (
                <Tab key={t} type="button" $on={t === tab} onClick={() => setTab(t)}>{t}</Tab>
              ))}
            </Tabs>
            <SectionTitle>对象属性</SectionTitle>
            {attributes.map(([label, value], i) => (
              <AttrRow key={label}>
                <KeyDot type="radio" name={`key-${i}`} aria-label={label} />
                <label htmlFor={`attr-${i}`}>{label}</label>
                <Field id={`attr-${i}`} value={value} width={66} />
              </AttrRow>
            ))}
            <AttrRow>
              <KeyDot type="radio" name="key-axis" aria-label="方向" />
              <label htmlFor="attr-axis">方向. . . .</label>
              <Drop id="attr-axis" value="+Y" width={71} />
            </AttrRow>
          </Manager>
        </RightSide>
      </Workspace>

      <Taskbar>
        <TaskApps>
          <TaskApp type="button" aria-label="Cortana">
            <svg width="18" height="18" fill="none" stroke="#f0f2f4" strokeWidth="2.500"><circle cx="9" cy="9" r="6.500" /></svg>
          </TaskApp>
          <TaskApp type="button" aria-label="任务视图">
            <svg width="18" height="18" fill="none" stroke="#f0f2f4" strokeWidth="1.800"><path d="M1 1V4H11V1M1 17V14H11V17M1.500 6.500H10.500V11.500H1.500ZM15 1V5M15 8V17" /></svg>
          </TaskApp>
          <TaskApp type="button" aria-label="OBS" $running>
            <svg width="24" height="24" viewBox="0 0 24 24">
              <circle cx="12" cy="12" r="11" fill="#221f20" stroke="#c8c8c8" strokeWidth="1.500" />
              <g fill="#a8a4a4">
                {[0, 120, 240].map(a => <path key={a} transform={`rotate(${a} 12 12)`} d="M12 12Q7 10 8 4.500 9.500 3 12 3 9 7 13.500 10Z" />)}
              </g>
            </svg>
          </TaskApp>
          <TaskApp type="button" aria-label="Cinema 4D" $running $active>
            <svg width="24" height="24" viewBox="0 0 24 24">
              <circle cx="12" cy="12" r="11.500" fill="#cfd6e6" /><circle cx="13" cy="12.500" r="8.500" fill="#1b1d6c" />
              <circle cx="14" cy="13" r="5" fill="#5a5ed0" /><path d="M8 9Q12 3 19 7 12 7 10 14Z" fill="#0c0e3c" />
            </svg>
          </TaskApp>
        </TaskApps>
        <Tray>
          <TrayIcon type="button" aria-label="more">
            <svg width="14" height="10" fill="none" stroke="#e8eaee" strokeWidth="1.500"><path d="M1 8L7 2 13 8" /></svg>
          </TrayIcon>
          <TrayIcon type="button" aria-label="network">
            <svg width="19" height="18" fill="none" stroke="#e8eaee" strokeWidth="1.600"><path d="M7 4H18V12H5M9 16H15M12 12V16M1 2V6H6V2M3.500 6V12" /></svg>
          </TrayIcon>
          <TrayIcon type="button" aria-label="pen">
            <svg width="18" height="18" fill="none" stroke="#e8eaee" strokeWidth="1.600"><circle cx="4" cy="13" r="2.500" /><path d="M6 12L15 2 17 4 8 14M9 12Q14 9 12 15 15 12 17 13M4 9L11 5" /></svg>
          </TrayIcon>
          <TrayIcon type="button" aria-label="Sogou" $wide>
            <svg width="18" height="18" viewBox="0 0 18 18"><rect x="1" y="1" width="16" height="16" rx="5" fill="#dc4428" /><path d="M13 5.500Q6 3 5.500 6.500T12 10Q13 14 5 12.500" fill="none" stroke="#fff" strokeWidth="2.500" /></svg>
          </TrayIcon>
          <Clock><span>18</span>2021</Clock>
        </Tray>
      </Taskbar>

      <ImeWidget>
        <svg width="68" height="134" viewBox="0 0 68 134">
          <circle cx="101" cy="60" r="65" fill="#1f1e20" />
          <path d="M68 40L62 66 68 72M62 66L68 62" stroke="#8d8b8d" fill="none" />
          <circle cx="16" cy="44" r="14" fill="#050505" /><circle cx="18" cy="84" r="14" fill="#050505" /><circle cx="32" cy="119" r="14" fill="#050505" />
          <text x="16" y="50" textAnchor="middle" fontSize="17" fontWeight="500" fill="#fff">中</text>
          <path d="M22 77Q32 84 25 91 19 94 13 89 23 88 22 77Z" fill="#fff" />
          <circle cx="29" cy="119" r="2.500" fill="none" stroke="#ddd" strokeWidth="1.500" /><path d="M35 118H39V122H36Z" fill="#ddd" />
        </svg>
      </ImeWidget>
    </Shell>
  );
};

export default App;
